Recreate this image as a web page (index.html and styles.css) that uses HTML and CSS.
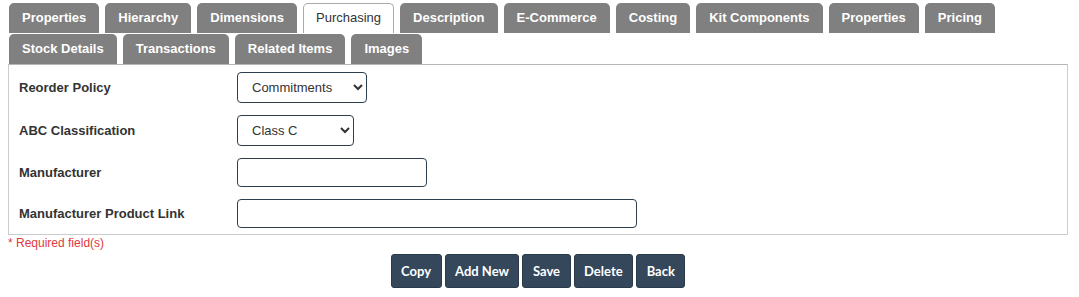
FILE: index.html
```html
<!DOCTYPE html>
<html lang="en">
<head>
    <meta charset="UTF-8">
    <meta name="viewport" content="width=device-width, initial-scale=1.0">
    <title>Item - Purchasing</title>
    <link rel="stylesheet" href="styles.css">
</head>
<body>
    <div class="page">
        <ul class="tabs">
            <li><a href="#">Properties</a></li>
            <li><a href="#">Hierarchy</a></li>
            <li><a href="#">Dimensions</a></li>
            <li class="active"><a href="#">Purchasing</a></li>
            <li><a href="#">Description</a></li>
            <li><a href="#">E-Commerce</a></li>
            <li><a href="#">Costing</a></li>
            <li><a href="#">Kit Components</a></li>
            <li><a href="#">Properties</a></li>
            <li><a href="#">Pricing</a></li>
            <li><a href="#">Stock Details</a></li>
            <li><a href="#">Transactions</a></li>
            <li><a href="#">Related Items</a></li>
            <li><a href="#">Images</a></li>
        </ul>

        <form class="tab-panel" id="purchasingForm">
            <div class="form-row">
                <label for="reorderPolicy">Reorder Policy</label>
                <select id="reorderPolicy" class="sel-policy">
                    <option>Commitments</option>
                    <option>Min / Max</option>
                    <option>None</option>
                </select>
            </div>
            <div class="form-row">
                <label for="abcClass">ABC Classification</label>
                <select id="abcClass" class="sel-abc">
                    <option>Class A</option>
                    <option>Class B</option>
                    <option selected>Class C</option>
                </select>
            </div>
            <div class="form-row">
                <label for="manufacturer">Manufacturer</label>
                <input type="text" id="manufacturer" class="inp-short">
            </div>
            <div class="form-row">
                <label for="manufacturerLink">Manufacturer Product Link</label>
                <input type="text" id="manufacturerLink" class="inp-long">
            </div>
        </form>

        <p class="required-note">* Required field(s)</p>

        <div class="actions">
            <button type="button">Copy</button>
            <button type="button">Add New</button>
            <button type="button">Save</button>
            <button type="button">Delete</button>
            <button type="button">Back</button>
        </div>
    </div>
</body>
</html>
```

FILE: styles.css
```css
body {
    font-family: Arial, "Liberation Sans", sans-serif;
    margin: 0;
    padding: 0;
    color: #333;
}

.page {
    width: 1060px;
    padding: 3px 0 0 8px;
}

/* tabs */
.tabs {
    list-style: none;
    margin: 0;
    padding: 0 0 0 1px;
    display: flex;
    flex-wrap: wrap;
    gap: 1px 6px;
}

.tabs li a {
    display: block;
    height: 30px;
    line-height: 29px;
    padding: 0 13px;
    background-color: #808080;
    color: #fff;
    font-size: 13px;
    font-weight: bold;
    text-decoration: none;
    border-radius: 5px 5px 0 0;
    box-sizing: border-box;
}

.tabs li.active a {
    background-color: #fff;
    color: #333;
    font-weight: normal;
    border: 1px solid #aaa;
    border-bottom: none;
    padding: 0 12px;
    line-height: 28px;
}

/* panel */
.tab-panel {
    border: 1px solid #ccc;
    border-top-color: #b5b5b5;
    padding: 7px 10px 6px;
    display: flex;
    flex-direction: column;
    gap: 12px;
}

.form-row {
    display: flex;
    align-items: center;
}

.form-row label {
    width: 218px;
    font-size: 13px;
    font-weight: bold;
    color: #333;
}

.form-row select,
.form-row input[type="text"] {
    font-family: Arial, "Liberation Sans", sans-serif;
    font-size: 13px;
    color: #333;
    border: 1px solid #2d3e4f;
    border-radius: 4px;
    background: #fff;
    box-sizing: border-box;
}

.form-row select {
    height: 31px;
    padding: 0 6px 0 10px;
}

.sel-policy {
    width: 130px;
}

.sel-abc {
    width: 117px;
}

.form-row input[type="text"] {
    height: 29px;
    padding: 0 8px;
}

.inp-short {
    width: 190px;
}

.inp-long {
    width: 400px;
}

.required-note {
    margin: 1px 0 0;
    font-size: 12px;
    color: #e03a3e;
}

/* buttons */
.actions {
    display: flex;
    justify-content: center;
    gap: 3px;
    margin-top: 4px;
}

.actions button {
    background-color: #34475b;
    color: #fff;
    border: 1px solid #2a3a4a;
    height: 34px;
    padding: 0 9.5px;
    border-radius: 3px;
    font-family: Lato, "Open Sans", sans-serif;
    font-weight: bold;
    font-size: 13px;
    cursor: pointer;
}
```
